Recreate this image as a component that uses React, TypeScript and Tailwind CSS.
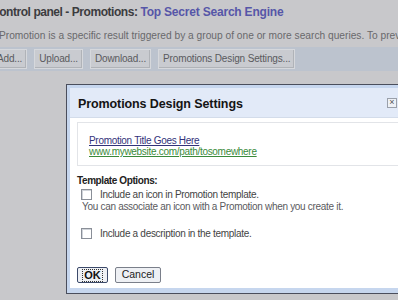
import React from "react";

function Btn({ children }: { children: React.ReactNode }) {
  return (
    <div className="h-[20px] px-[4px] flex items-center border border-[#d6d8dc] bg-[#c9cbd0] text-[10px] tracking-[-0.15px] text-[#5a5a5e] leading-none whitespace-nowrap shadow-[inset_-1px_-1px_0_#b0b3b8]">
      {children}
    </div>
  );
}

function Check() {
  return <div className="w-[11px] h-[11px] border border-[#8a8f98] bg-white shrink-0 shadow-[inset_1px_1px_0_#d0d4da]" />;
}

export default function App() {
  return (
    <div
      className="relative w-[398px] h-[300px] overflow-hidden bg-[#c8c8cb]"
      style={{ fontFamily: '"Liberation Sans", Arial, sans-serif' }}
    >
      <div className="pt-[4px] -ml-[9px] text-[12px] tracking-[-0.45px] font-bold text-[#3c3c40] whitespace-nowrap leading-[16px]">
        Control panel - Promotions:{" "}
        <span className="text-[#5656a8] tracking-[-0.2px]">Top Secret Search Engine</span>
      </div>
      <div className="mt-[9px] -ml-[1px] text-[10.2px] text-[#68686c] whitespace-nowrap leading-[13px]">
        Promotion is a specific result triggered by a group of one or more search queries. To preview your
      </div>
      <div className="mt-[5px] h-[24px] bg-[#bcc3ce] flex items-center gap-[7px] -ml-[8px]">
        <Btn>Add...</Btn>
        <Btn>Upload...</Btn>
        <Btn>Download...</Btn>
        <Btn>Promotions Design Settings...</Btn>
      </div>

      {/* cursor */}
      <svg className="absolute left-[217px] top-[89px]" width="9" height="14" viewBox="0 0 9 14">
        <path d="M0.5 0.5 L0.5 11 L3 8.5 L5 13 L6.5 12.3 L4.6 8 L8 8 Z" fill="#fff" stroke="#222" strokeWidth="1" />
      </svg>

      {/* dialog */}
      <div className="absolute left-[66px] top-[84px] w-[360px] h-[210px] border border-[#4a4e5c] bg-[#c6d6ee] pt-[3px] pl-[3px] pr-[3px] pb-[5px] flex flex-col">
        <div className="flex flex-col flex-1 bg-white">
          <div className="h-[30px] bg-[#e2eaf8] flex items-center justify-between pl-[8px] pr-[25px] border-b border-[#d3dcea]">
            <div className="text-[12.5px] tracking-[-0.1px] font-bold text-[#141414] pt-[3px]">Promotions Design Settings</div>
            <div className="w-[10px] h-[10px] border border-[#9aa0aa] bg-[#eef1f6] flex items-center justify-center text-[9px] leading-none text-[#555]">×</div>
          </div>
          <div className="flex-1 pl-[7px] pt-[4px] flex flex-col text-[10px] tracking-[-0.3px]">
            <div className="h-[44px] border border-[#e2e4e8] pl-[11px] pt-[12px] flex flex-col leading-[11px]">
              <span className="text-[#32327a] underline">Promotion Title Goes Here</span>
              <span className="text-[#3a8a3a] underline">www.mywebsite.com/path/tosomewhere</span>
            </div>
            <div className="mt-[8px] font-bold text-[#222] leading-[13px] tracking-[-0.4px]">Template Options:</div>
            <div className="mt-[1px] pl-[4px] flex items-center gap-[8px] text-[#444] leading-[13px]">
              <Check />
              <span>Include an icon in Promotion template.</span>
            </div>
            <div className="mt-[-1px] pl-[5px] text-[#5a5a5e] leading-[13px]">
              You can associate an icon with a Promotion when you create it.
            </div>
            <div className="mt-[14px] pl-[4px] flex items-center gap-[8px] text-[#444] leading-[13px]">
              <Check />
              <span>Include a description in the template.</span>
            </div>
            <div className="mt-[27px] flex gap-[6px] tracking-normal">
              <div className="h-[16px] w-[31px] border border-[#3c4a6a] bg-[#eef0f4] flex items-center justify-center text-[11px] font-bold text-[#111] rounded-[2px]">
                <span className="outline outline-1 outline-dotted outline-[#333] px-[1px] leading-[11px]">OK</span>
              </div>
              <div className="ml-[1px] h-[16px] w-[46px] border border-[#7a7f8a] bg-[#eef0f4] flex items-center justify-center text-[10.5px] text-[#222] rounded-[2px]">
                Cancel
              </div>
            </div>
          </div>
        </div>
      </div>
    </div>
  );
}
